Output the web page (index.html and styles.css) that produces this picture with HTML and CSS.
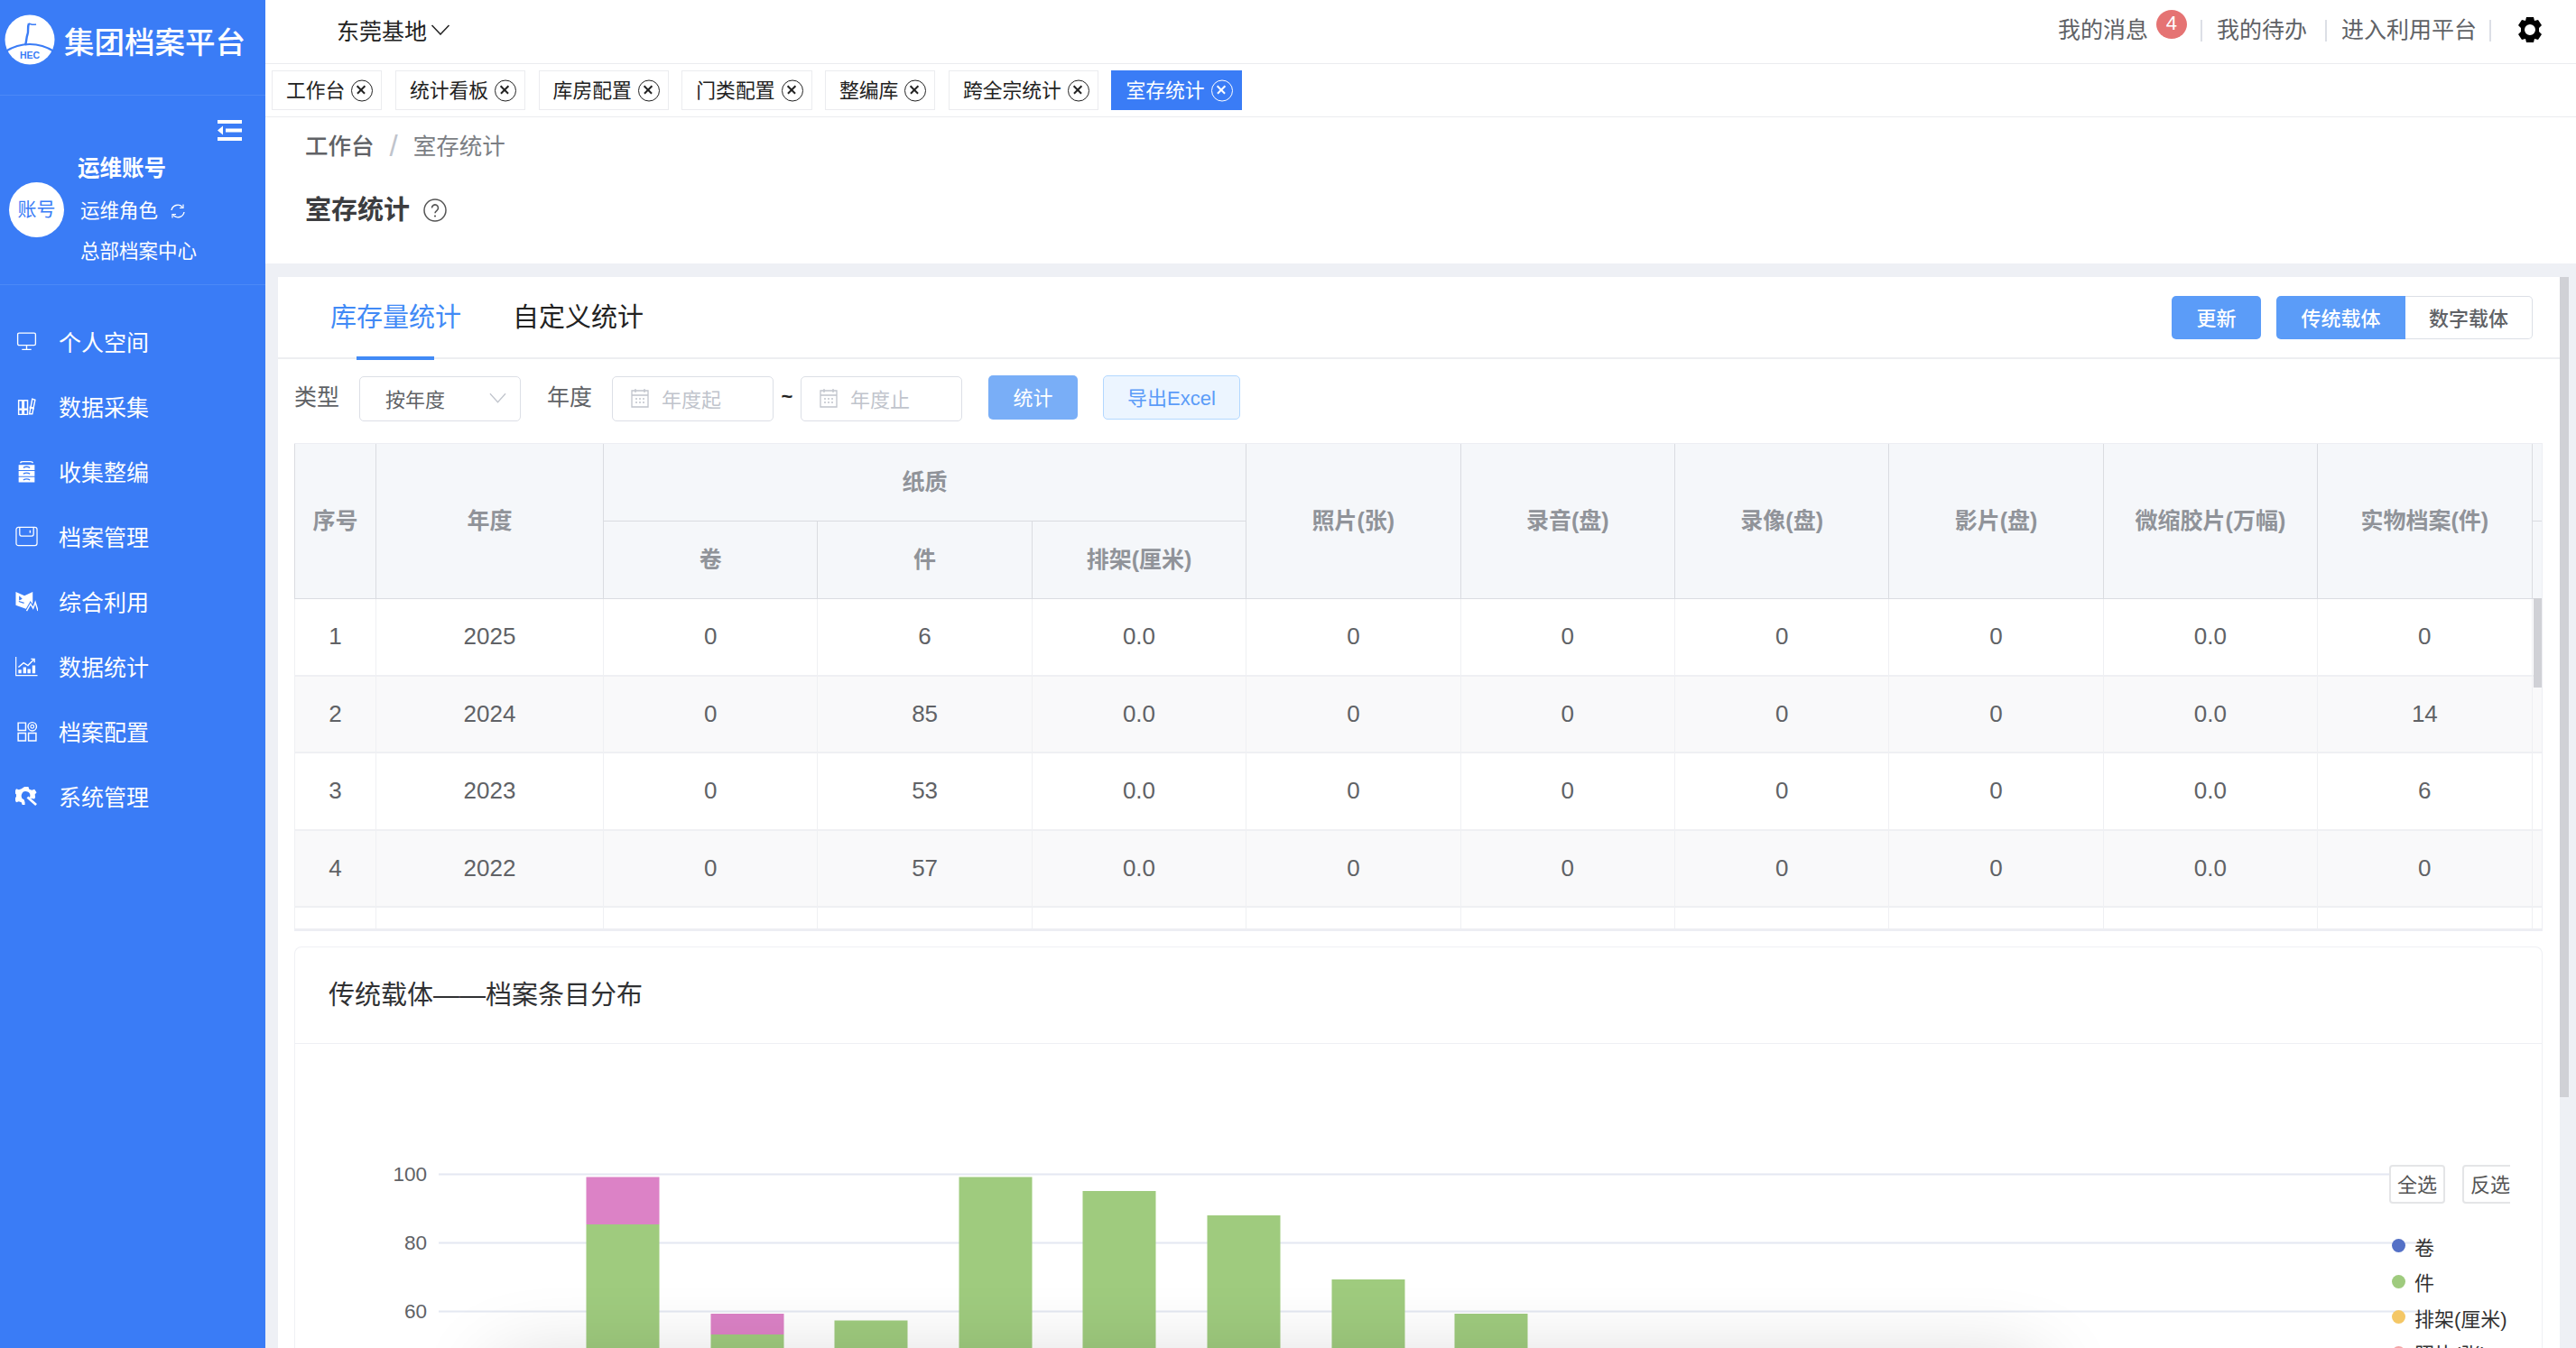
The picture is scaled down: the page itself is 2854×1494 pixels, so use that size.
FILE: index.html
```html
<!DOCTYPE html>
<html lang="zh-CN">
<head>
<meta charset="utf-8">
<title>室存统计</title>
<link rel="stylesheet" href="styles.css">
</head>
<body>
<div class="app">
  <aside class="side">
    <div class="brand">
      <svg class="logo" viewBox="0 0 56 56" aria-hidden="true">
        <circle cx="28" cy="28" r="27.500" fill="#fff"/>
        <path d="M27 10c-2 5 0 8-1.500 12s-1 8-2.500 12" fill="none" stroke="#3a7cf6" stroke-width="2.400"/>
        <path d="M27 10c3 1 5 2 8 1" fill="none" stroke="#3a7cf6" stroke-width="1.600"/>
        <path d="M1 41c8-5 17-8 27-8s19 3 27 8" fill="none" stroke="#3a7cf6" stroke-width="2.200"/>
        <text x="28" y="49" class="logo-hec">HEC</text>
      </svg>
      <span class="brand-name">集团档案平台</span>
    </div>
    <div class="user">
      <button class="fold" aria-label="收起">
        <svg viewBox="0 0 27 23"><path d="M0 0h27v4H0zM9 9.500h18v4H9zM0 19h27v4H0zM6 6.500v10L0 11.500z" fill="#fff"/></svg>
      </button>
      <div class="user-row">
        <div class="avatar">账号</div>
        <div class="user-lines">
          <div class="user-name">运维账号</div>
          <div class="user-role">运维角色
            <svg class="refresh" viewBox="0 0 18 18"><path d="M2 8a7 7 0 0 1 12-3.600M16 10a7 7 0 0 1-12 3.600" fill="none" stroke="#fff" stroke-width="1.400"/><path d="M15 1.500v4h-4M3 16.500v-4h4" fill="none" stroke="#fff" stroke-width="1.200"/></svg>
          </div>
          <div class="user-org">总部档案中心</div>
        </div>
      </div>
    </div>
    <nav class="menu">
      <a class="item"><span class="ico"><svg viewBox="0 0 24 24"><rect x="2.500" y="3" width="19" height="13" rx="1.500" fill="none" stroke="#fff" stroke-width="1.300"/><path d="M12 16v4M7 20.500h10" stroke="#fff" stroke-width="1.300"/></svg></span>个人空间</a>
      <a class="item"><span class="ico"><svg viewBox="0 0 24 24"><path d="M3.500 5.500h4v15h-4zM9 5.500h4v15H9z" fill="none" stroke="#fff" stroke-width="1.400"/><path d="M15 20l3-16 3 1-3 15z" fill="none" stroke="#fff" stroke-width="1.400"/><path d="M4 15h3M9.500 15h3M15 13l5 1" stroke="#fff" stroke-width="2"/></svg></span>数据采集</a>
      <a class="item"><span class="ico"><svg viewBox="0 0 24 24"><path d="M5.500 3q0-1.500 3-1.500h7q3 0 3 1.500" fill="none" stroke="#fff" stroke-width="1.300"/><path d="M3.500 5h17v5.500h-17zM3.500 11.500h17v5.500h-17zM3.500 18h17v5.500h-17z" fill="#fff"/><path d="M8.500 8q3.500-2 7 0M8.500 14.500q3.500-2 7 0M8.500 21q3.500-2 7 0" fill="none" stroke="#3a7cf6" stroke-width="1.300"/></svg></span>收集整编</a>
      <a class="item"><span class="ico"><svg viewBox="0 0 26 24"><rect x="1" y="1.500" width="24" height="21" rx="2.500" fill="none" stroke="#fff" stroke-width="1.300"/><path d="M5 1.500v8q0 2 2 2h12q2 0 2-2v-8" fill="none" stroke="#fff" stroke-width="1.300"/><path d="M17 5v3" stroke="#fff" stroke-width="1.500"/></svg></span>档案管理</a>
      <a class="item"><span class="ico"><svg viewBox="0 0 26 24"><path d="M.5 1l10 4.500L20 1v13l-5 7.500-14.500-5z" fill="#fff"/><path d="M5 7l2 2-2 1zM4 12l6 2" stroke="#3a7cf6" stroke-width="1.300" fill="#3a7cf6"/><path d="M13 23l4.500-8 3 5 2.500-7 3 10" fill="none" stroke="#3a7cf6" stroke-width="3.600"/><path d="M13 23l4.500-8 3 5 2.500-7 3 10" fill="none" stroke="#fff" stroke-width="1.500"/></svg></span>综合利用</a>
      <a class="item"><span class="ico"><svg viewBox="0 0 26 24"><path d="M.7 1v21.500H25.500" fill="none" stroke="#fff" stroke-width="1.200"/><path d="M3.500 16h3.500v4H3.500zM9 13h3.500v7H9zM14 15h3.500v5H14zM19.500 11H23v9h-3.500z" fill="#fff"/><path d="M3.500 13l6-5 5 3 7-7M18 3.500h4v4" fill="none" stroke="#fff" stroke-width="1.400"/></svg></span>数据统计</a>
      <a class="item"><span class="ico"><svg viewBox="0 0 24 24"><path d="M3 3h8v8H3zM3 14h8v8H3zM14 14h8v8h-8z" fill="none" stroke="#fff" stroke-width="1.400"/><circle cx="18" cy="7" r="4.500" fill="none" stroke="#fff" stroke-width="1.400"/><circle cx="18" cy="7" r="1.800" fill="none" stroke="#fff" stroke-width="1.100"/></svg></span>档案配置</a>
      <a class="item"><span class="ico"><svg viewBox="0 0 26 24"><path d="M10.500 1h4.500l1 3 3 1 3-1 2.500 3.500-2 2.500.5 3-1 2-6-1 1-2a5 5 0 1 0-7 4l1 3v3H8l-1-3-3-1-3 1-2-4 2-2.500v-2.500l-2-2.500 2-4 3 1 3-1z" fill="#fff"/><path d="M14 13l10 9" stroke="#fff" stroke-width="2.800"/></svg></span>系统管理</a>
    </nav>
  </aside>

  <div class="main">
    <header class="top">
      <div class="base">东莞基地<svg class="chev" viewBox="0 0 22 12"><path d="M1.500 1l9.500 10 9.500-10" fill="none" stroke="#222" stroke-width="1.500"/></svg></div>
      <div class="top-links">
        <a class="link">我的消息<span class="badge">4</span></a>
        <a class="link">我的待办</a>
        <a class="link">进入利用平台</a>
        <svg class="gear" viewBox="0 0 26 28"><path fill-rule="evenodd" d="M9 0h8l1 4 4-1 4 6-3 3v4l3 3-4 6-4-1-1 4H9l-1-4-4 1-4-6 3-3v-4L0 9l4-6 4 1zM13 8a6 6 0 1 0 0 12 6 6 0 0 0 0-12z" fill="#000"/></svg>
      </div>
    </header>

    <div class="tagbar">
      <a class="tag">工作台<i class="x"></i></a>
      <a class="tag">统计看板<i class="x"></i></a>
      <a class="tag">库房配置<i class="x"></i></a>
      <a class="tag">门类配置<i class="x"></i></a>
      <a class="tag">整编库<i class="x"></i></a>
      <a class="tag">跨全宗统计<i class="x"></i></a>
      <a class="tag active">室存统计<i class="x"></i></a>
    </div>

    <section class="pagehead">
      <div class="crumb"><span class="c1">工作台</span><span class="slash">/</span><span class="c2">室存统计</span></div>
      <h1 class="title">室存统计
        <svg class="help" viewBox="0 0 26 26"><circle cx="13" cy="13" r="12" fill="none" stroke="#555" stroke-width="1.500"/><path d="M9.500 10.500a3.500 3.500 0 1 1 5.500 2.800c-1.300.9-2 1.500-2 3" fill="none" stroke="#555" stroke-width="1.600"/><circle cx="13" cy="19.500" r="1.100" fill="#555"/></svg>
      </h1>
    </section>

    <main class="body">
      <div class="thumb"></div>
      <div class="card">
        <div class="tabs">
          <div class="tab on">库存量统计</div>
          <div class="tab">自定义统计</div>
          <div class="tab-actions">
            <button class="btn primary">更新</button>
            <div class="seg"><button class="btn primary flat">传统载体</button><button class="btn plain">数字载体</button></div>
          </div>
        </div>

        <div class="filters">
          <label class="flabel">类型</label>
          <div class="input select">按年度<svg viewBox="0 0 20 12"><path d="M1 1l9 10 9-10" fill="none" stroke="#c0c4cc" stroke-width="1.300"/></svg></div>
          <label class="flabel year">年度</label>
          <div class="input date"><svg viewBox="0 0 20 22"><path d="M1 3h18v18H1zM1 8h18M5 1v4M15 1v4" fill="none" stroke="#c0c4cc" stroke-width="1.300"/><path d="M5 12h10M5 16h10" stroke="#c0c4cc" stroke-width="1.300" stroke-dasharray="2 2"/></svg>年度起</div>
          <span class="tilde">~</span>
          <div class="input date"><svg viewBox="0 0 20 22"><path d="M1 3h18v18H1zM1 8h18M5 1v4M15 1v4" fill="none" stroke="#c0c4cc" stroke-width="1.300"/><path d="M5 12h10M5 16h10" stroke="#c0c4cc" stroke-width="1.300" stroke-dasharray="2 2"/></svg>年度止</div>
          <button class="btn stat">统计</button>
          <button class="btn export">导出Excel</button>
        </div>

        <div class="tablewrap">
          <div class="tscroll"></div>
          <table class="grid">
            <colgroup>
              <col class="c-no"><col class="c-year"><col class="c-n"><col class="c-n"><col class="c-n"><col class="c-n"><col class="c-n"><col class="c-n"><col class="c-n"><col class="c-n"><col class="c-n"><col class="c-gutter">
            </colgroup>
            <thead>
              <tr class="h1">
                <th rowspan="2">序号</th><th rowspan="2">年度</th><th colspan="3">纸质</th>
                <th rowspan="2">照片(张)</th><th rowspan="2">录音(盘)</th><th rowspan="2">录像(盘)</th><th rowspan="2">影片(盘)</th><th rowspan="2">微缩胶片(万幅)</th><th rowspan="2">实物档案(件)</th><th class="gut"></th>
              </tr>
              <tr class="h2"><th>卷</th><th>件</th><th>排架(厘米)</th><th class="gut"></th></tr>
            </thead>
            <tbody>
              <tr><td>1</td><td>2025</td><td>0</td><td>6</td><td>0.0</td><td>0</td><td>0</td><td>0</td><td>0</td><td>0.0</td><td>0</td><td class="gut"></td></tr>
              <tr class="alt"><td>2</td><td>2024</td><td>0</td><td>85</td><td>0.0</td><td>0</td><td>0</td><td>0</td><td>0</td><td>0.0</td><td>14</td><td class="gut"></td></tr>
              <tr><td>3</td><td>2023</td><td>0</td><td>53</td><td>0.0</td><td>0</td><td>0</td><td>0</td><td>0</td><td>0.0</td><td>6</td><td class="gut"></td></tr>
              <tr class="alt"><td>4</td><td>2022</td><td>0</td><td>57</td><td>0.0</td><td>0</td><td>0</td><td>0</td><td>0</td><td>0.0</td><td>0</td><td class="gut"></td></tr>
              <tr><td></td><td></td><td></td><td></td><td></td><td></td><td></td><td></td><td></td><td></td><td></td><td class="gut"></td></tr>
            </tbody>
          </table>
        </div>

        <div class="panel">
          <div class="panel-head">传统载体——档案条目分布</div>
          <div class="chart">
            <svg class="plot" viewBox="0 0 2491 338" width="2491" height="338" aria-label="档案条目分布">
              <g class="gridlines">
                <path d="M159 144.500H2359M159 220.500H2359M159 296.500H2359"/>
              </g>
              <g class="ylabels">
                <text x="146" y="152">100</text>
                <text x="146" y="228">80</text>
                <text x="146" y="304">60</text>
              </g>
              <g class="green">
                <rect x="322.500" y="200" width="81" height="140"/>
                <rect x="460.500" y="322" width="81" height="20"/>
                <rect x="597.500" y="306.500" width="81" height="40"/>
                <rect x="735.500" y="147.500" width="81" height="200"/>
                <rect x="872.500" y="163" width="81" height="180"/>
                <rect x="1010.500" y="190" width="81" height="150"/>
                <rect x="1148.500" y="261" width="81" height="80"/>
                <rect x="1284.500" y="299" width="81" height="40"/>
              </g>
              <g class="pink">
                <rect x="322.500" y="147.500" width="81" height="52.500"/>
                <rect x="460.500" y="299" width="81" height="23"/>
              </g>
            </svg>
            <div class="legend-tools"><button class="ltool">全选</button><button class="ltool">反选</button></div>
            <ul class="legend">
              <li><i class="dot d1"></i>卷</li>
              <li><i class="dot d2"></i>件</li>
              <li><i class="dot d3"></i>排架(厘米)</li>
              <li><i class="dot d4"></i>照片(张)</li>
            </ul>
          </div>
        </div>
      </div>
      <div class="bottom-shadow"></div>
    </main>
  </div>
</div>
</body>
</html>
```
FILE: styles.css
```css
* { box-sizing: border-box; }
html, body { margin: 0; padding: 0; height: 100%; overflow: hidden; }
body {
  font-family: "Liberation Sans", "Noto Sans CJK SC", sans-serif;
  color: #303133;
  background: #eef0f5;
}
button { font-family: inherit; cursor: pointer; }
a { color: inherit; text-decoration: none; }

.app { display: flex; width: 2854px; height: 1494px; overflow: hidden; }

/* sidebar */
.side { width: 294px; flex: none; background: #3a7cf6; color: #fff; }
.brand { height: 106px; padding: 16px 0 0 5px; display: flex; align-items: flex-start; border-bottom: 1px solid #4c89f7; }
.logo { width: 56px; height: 56px; flex: none; }
.logo-hec { font: 700 10.500px "Liberation Sans", sans-serif; fill: #3a7cf6; text-anchor: middle; }
.brand-name { margin: 12px 0 0 10px; font-size: 33.500px; line-height: 40px; white-space: nowrap; font-weight: 500; }
.user { height: 210px; position: relative; border-bottom: 1px solid #4c89f7; }
.fold { position: absolute; left: 241px; top: 27px; width: 27px; height: 23px; padding: 0; border: 0; background: none; }
.fold svg { display: block; width: 27px; height: 23px; }
.user-row { display: flex; align-items: center; padding: 64px 0 0 10px; }
.avatar { width: 61px; height: 61px; flex: none; border-radius: 50%; background: #fff; color: #3a7cf6; font-size: 21px; line-height: 60px; text-align: center; }
.user-lines { margin-left: 15px; }
.user-name { font-size: 24.500px; font-weight: 700; line-height: 34px; margin-top: 0; }
.user-role { font-size: 21.500px; line-height: 30px; margin: 15px 0 0 3px; display: flex; align-items: center; }
.refresh { width: 18px; height: 18px; margin-left: 13px; }
.user-org { font-size: 21.500px; line-height: 30px; margin: 15px 0 0 3px; }

.menu { padding-top: 26px; }
.item { display: flex; align-items: center; height: 72px; padding-left: 17px; font-size: 25px; color: #fff; }
.ico { width: 25px; height: 25px; margin-right: 23px; flex: none; display: flex; }
.ico svg { width: 25px; height: 25px; display: block; }

/* main */
.main { flex: 1; min-width: 0; display: flex; flex-direction: column; position: relative; }
.top { height: 71px; flex: none; background: #fff; border-bottom: 1px solid #ebecef; display: flex; align-items: center; justify-content: space-between; padding: 0 38px 4px 79px; }
.base { display: flex; align-items: center; font-size: 25px; color: #222; }
.chev { width: 22px; height: 12px; margin-left: 4px; }
.top-links { display: flex; align-items: center; }
.link { position: relative; font-size: 25px; color: #606266; line-height: 30px; padding-right: 16px; margin-right: 16px; }
.link::after { content: ""; position: absolute; right: 0; top: 4px; width: 2px; height: 24px; background: #dcdfe6; }
.link:first-child { padding-right: 60px; }
.link:nth-child(2) { padding-right: 22px; }
.badge { position: absolute; left: 109px; top: -7px; width: 34px; height: 32px; border-radius: 50%; background: #e57373; color: #fff; font-size: 22px; line-height: 30px; text-align: center; }
.gear { width: 26px; height: 28px; margin-left: 14px; }

.tagbar { height: 59px; flex: none; background: #fff; border-bottom: 1px solid #ebecef; display: flex; align-items: flex-start; gap: 14.500px; padding: 7px 0 0 7px; }
.tag { height: 44px; display: flex; align-items: center; padding: 0 9px 3px 15px; font-size: 21.800px; color: #222; background: #fff; border: 1px solid #ebecef; }
.tag.active { background: #3a7cf6; border-color: #3a7cf6; color: #fff; }
.x { position: relative; width: 24px; height: 24px; margin-left: 7px; border: 1.500px solid currentColor; border-radius: 50%; flex: none; transform: translateY(1.500px); }
.x::before, .x::after { content: ""; position: absolute; left: 4px; top: 9.500px; width: 12px; height: 1.500px; background: currentColor; }
.x::before { transform: rotate(45deg); }
.x::after { transform: rotate(-45deg); }

.pagehead { height: 162px; flex: none; background: #fff; padding: 13px 0 0 44px; }
.crumb { font-size: 25.500px; line-height: 38px; display: flex; align-items: center; }
.c1 { color: #606266; font-weight: 500; }
.slash { color: #c0c4cc; margin: 0 17px; font-size: 33px; }
.c2 { color: #7b7e84; }
.title { margin: 33px 0 0; font-size: 29px; line-height: 38px; font-weight: 700; color: #3c3d40; display: flex; align-items: center; }
.help { width: 26px; height: 26px; margin-left: 15px; }

.body { flex: 1; min-height: 0; position: relative; padding: 15px 0 0 14px; overflow: hidden; }
.thumb { position: absolute; left: 2542px; top: 15px; width: 10px; height: 909px; background: #d0d1d6; z-index: 3; }
.card { width: 2528px; background: #fff; padding: 0 19px 0 18px; min-height: 1300px; }
.tabs { height: 91px; margin: 0 -19px 0 -18px; padding: 21px 30px 0 58px; display: flex; align-items: flex-start; border-bottom: 2px solid #edeef1; position: relative; }
.tab { font-size: 29px; line-height: 48px; margin-right: 57px; color: #222; }
.tab.on { color: #418af6; }
.tab.on::after { content: ""; position: absolute; left: 87px; bottom: -3px; width: 86px; height: 4px; background: #418af6; }
.tab-actions { margin-left: auto; display: flex; align-items: center; gap: 17px; }
.btn { height: 48px; border: 0; border-radius: 5px; font-size: 22px; padding: 0 0 3px; }
.primary { width: 99px; background: #5b9cf8; color: #fff; font-weight: 500; }
.seg { display: flex; }
.flat { width: 143px; border-radius: 5px 0 0 5px; }
.plain { width: 141px; background: #fff; border: 1px solid #dcdfe6; border-left: 0; border-radius: 0 5px 5px 0; color: #606266; font-weight: 500; }

.filters { height: 93px; padding-top: 19px; display: flex; align-items: flex-start; }
.flabel { font-size: 25px; line-height: 47px; color: #606266; width: 72px; flex: none; }
.flabel.year { margin-left: 29px; }
.input { height: 50px; width: 179px; padding-bottom: 2px; border: 1.500px solid #dcdfe6; border-radius: 5px; background: #fff; display: flex; align-items: center; font-size: 22px; }
.select { padding-left: 28px; padding-right: 15px; justify-content: space-between; color: #606266; }
.select svg { width: 19px; height: 12px; }
.date { padding-left: 20px; color: #c0c4cc; }
.date svg { width: 20px; height: 22px; margin-right: 14px; }
.tilde { width: 30px; text-align: center; line-height: 46px; font-size: 22px; font-weight: 700; color: #222; }
.stat { width: 99px; background: #79aef7; color: #fff; margin-left: 29px; height: 49px; margin-top: -1px; }
.export { width: 152px; background: #ecf5ff; border: 1.500px solid #b3d8ff; color: #5b9cf8; margin-left: 28px; height: 49px; margin-top: -1px; }

.tablewrap { position: relative; height: 541px; overflow: hidden; border-top: 1px solid #edeef3; border-right: 1px solid #edeef3; border-bottom: 3px solid #edeef3; }
.tscroll { position: absolute; right: 0; top: 171px; width: 9px; height: 99px; background: #d0d1d6; }
.grid { width: 2490px; table-layout: fixed; border-collapse: collapse; font-size: 26px; color: #606266; }
.c-no { width: 90px; }
.c-year { width: 252px; }
.c-n { width: 237.400px; }
.c-gutter { width: 11.400px; }
th { background: #f5f7fa; color: #909399; font-weight: 700; font-size: 25px; padding: 0 0 4px; border: 1px solid #dadce1; border-top: 0; text-align: center; }
.h1 th { height: 85px; }
.h2 th { height: 86px; }
td { height: 85.500px; text-align: center; border: 1px solid #eff0f3; border-top: 0; border-bottom-width: 2px; padding: 0; }
.alt td { background: #f9f9fa; }
.gut { border-right: 0; }

.panel { margin-top: 17px; border: 1.500px solid #eff0f4; border-radius: 8px 8px 0 0; border-bottom: 0; }
.panel-head { height: 107px; padding: 0 0 0 37px; font-size: 29px; line-height: 107px; color: #303133; border-bottom: 1px solid #eff0f4; }
.chart { position: relative; height: 500px; }
.plot { display: block; }
.gridlines path { stroke: #e4e8f2; stroke-width: 2; fill: none; }
.ylabels text { font-size: 22.500px; fill: #606266; text-anchor: end; }
.green rect { fill: #9fcb7e; }
.pink rect { fill: #dc82c6; }
.legend-tools { position: absolute; left: 2320px; top: 134px; width: 134px; display: flex; gap: 19px; overflow: hidden; }
.ltool { flex: none; width: 62px; height: 43px; padding: 0 0 3px; background: #fff; border: 2px solid #e4e5e7; border-radius: 4px; font-size: 22px; color: #555; }
.legend { position: absolute; left: 2323px; top: 204px; margin: 0; padding: 0; list-style: none; font-size: 22px; color: #333; }
.legend li { height: 39.500px; display: flex; align-items: center; white-space: nowrap; }
.dot { width: 15px; height: 15px; border-radius: 50%; margin-right: 10px; flex: none; }
.d1 { background: #5470c6; }
.d2 { background: #9fcb7e; }
.d3 { background: #f4c766; }
.d4 { background: #f2a5a5; }

.bottom-shadow { position: absolute; left: 256px; right: 594px; bottom: -80px; height: 60px; box-shadow: 0 0 90px 0 rgba(0, 0, 0, .2); z-index: 2; }
```
